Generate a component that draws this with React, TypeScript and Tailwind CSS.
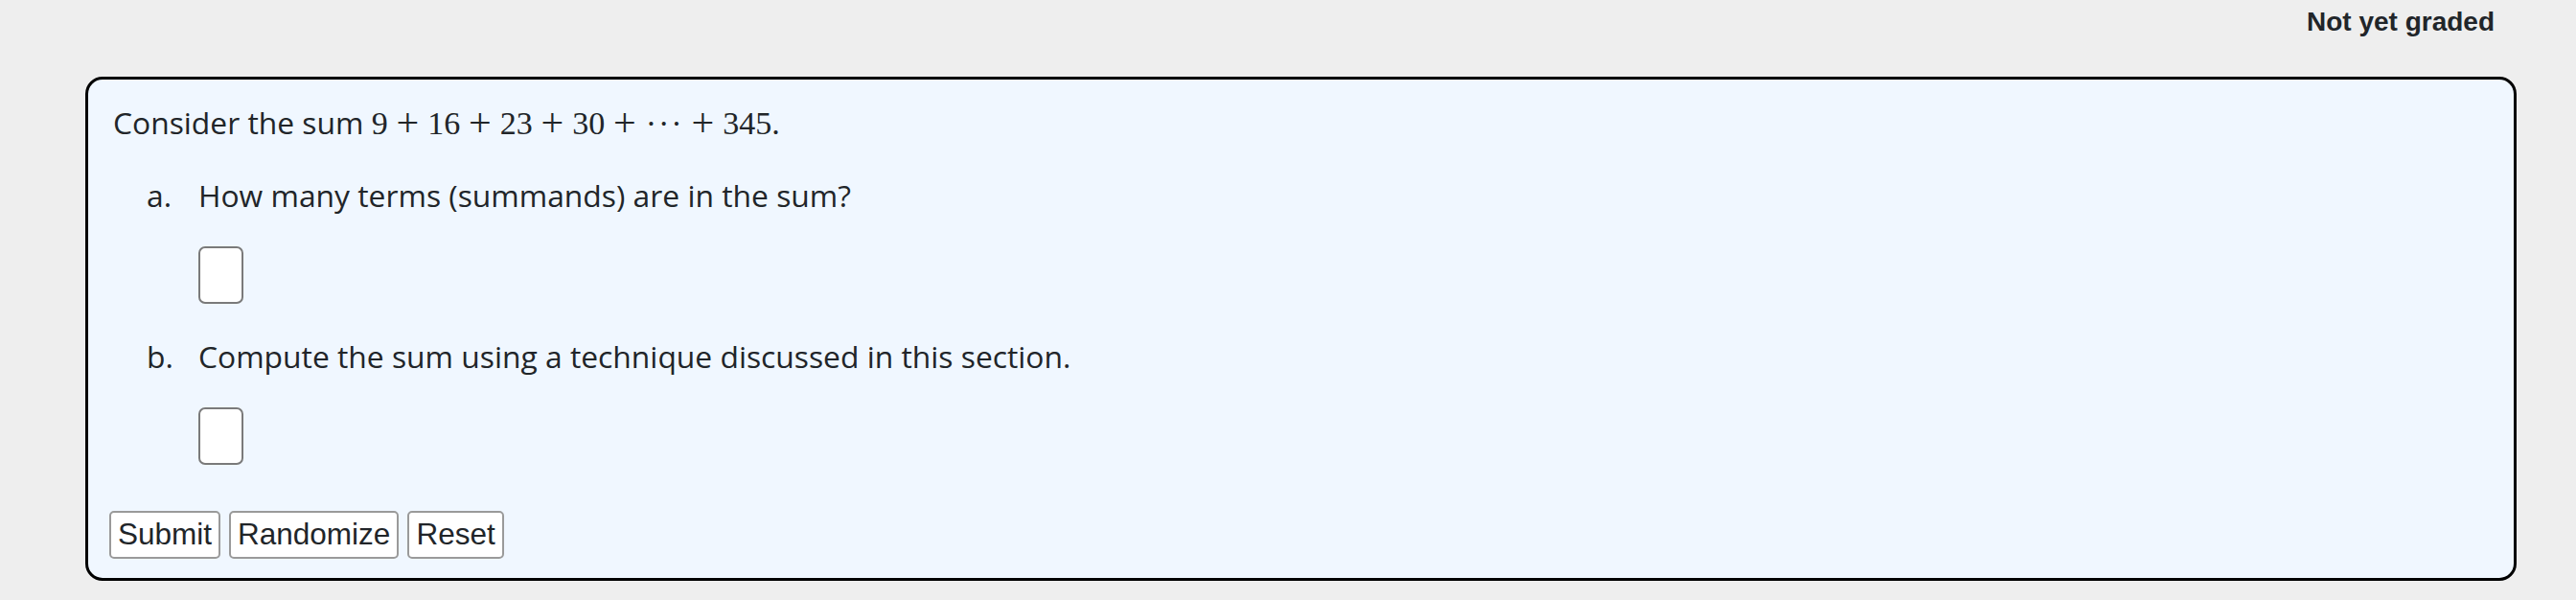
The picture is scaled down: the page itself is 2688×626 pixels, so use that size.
import React from 'react'

function Plus() {
  return (
    <span className="inline-block w-[26.5px] mx-[7.5px] text-center font-['Liberation_Serif',serif] text-[42px] leading-none align-[-2px]">
      +
    </span>
  )
}

function CDots() {
  return (
    <span className="inline-flex w-[40px] justify-between px-[1px] font-['Liberation_Serif',serif] text-[34px] leading-none">
      <span>·</span>
      <span>·</span>
      <span>·</span>
    </span>
  )
}

function SumExpr() {
  const num = "font-['Liberation_Serif',serif] text-[34px]"
  return (
    <span className="whitespace-nowrap">
      <span className={num}>9</span>
      <Plus />
      <span className={num}>16</span>
      <Plus />
      <span className={num}>23</span>
      <Plus />
      <span className={num}>30</span>
      <Plus />
      <CDots />
      <Plus />
      <span className={num}>345.</span>
    </span>
  )
}

function AnswerBox() {
  return <input type="text" className="block w-[47px] h-[60px] border-2 border-[#7a7a7a] rounded-[7px] bg-white" />
}

export default function App() {
  const parts = [
    { label: 'a.', text: 'How many terms (summands) are in the sum?' },
    { label: 'b.', text: 'Compute the sum using a technique discussed in this section.' },
  ]

  return (
    <div className="min-h-screen bg-[#eeeeee] text-[#212529] font-['Open_Sans',sans-serif]">
      {/* Grade status */}
      <div className="pt-[7px] pr-[85px] text-right font-['Liberation_Sans',sans-serif] font-bold text-[28px] leading-[32px]">
        Not yet graded
      </div>

      {/* Exercise card */}
      <div className="mt-[41px] ml-[89px] mr-[62px] border-[3px] border-black rounded-[18px] bg-[#f0f7ff] pt-[21px] pb-[20px] pl-[22px] pr-6">
        <p className="ml-[4px] text-[31.8px] leading-[47px]">
          Consider the sum <SumExpr />
        </p>

        <ol className="mt-[28px] pl-[39px]">
          {parts.map((part, i) => (
            <li key={part.label} className={i > 0 ? 'mt-[31px]' : ''}>
              <div className="flex text-[31.8px] leading-[47px]">
                <span className="w-[54px] shrink-0">{part.label}</span>
                <span>{part.text}</span>
              </div>
              <div className="mt-[30px] ml-[54px]">
                <AnswerBox />
              </div>
            </li>
          ))}
        </ol>

        <div className="mt-[48px] flex gap-[9px] font-['Liberation_Sans',sans-serif] text-[31.5px]">
          {['Submit', 'Randomize', 'Reset'].map((label) => (
            <button
              key={label}
              className="h-[50px] px-[7px] flex items-center border-2 border-[#9a9a9a] rounded-[5px] bg-white leading-none"
            >
              {label}
            </button>
          ))}
        </div>
      </div>
    </div>
  )
}
